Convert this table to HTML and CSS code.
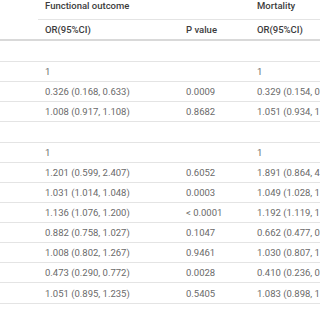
FILE: index.html
```html
<!DOCTYPE html>
<html>
<head>
<meta charset="utf-8">
<link rel="stylesheet" href="styles.css">
</head>
<body>
<div class="table">
  <div class="row head1">
    <div class="cell"></div>
    <div class="cell group span2">Functional outcome</div>
    <div class="cell group span2">Mortality</div>
  </div>
  <div class="row head2">
    <div class="cell"></div>
    <div class="cell">OR(95%CI)</div>
    <div class="cell">P value</div>
    <div class="cell">OR(95%CI)</div>
    <div class="cell">P value</div>
  </div>
  <div class="row tall"><div class="cell"></div><div class="cell"></div><div class="cell"></div><div class="cell"></div><div class="cell"></div></div>
  <div class="row"><div class="cell"></div><div class="cell">1</div><div class="cell"></div><div class="cell">1</div><div class="cell"></div></div>
  <div class="row"><div class="cell"></div><div class="cell">0.326 (0.168, 0.633)</div><div class="cell">0.0009</div><div class="cell">0.329 (0.154, 0.703)</div><div class="cell">0.0041</div></div>
  <div class="row"><div class="cell"></div><div class="cell">1.008 (0.917, 1.108)</div><div class="cell">0.8682</div><div class="cell">1.051 (0.934, 1.183)</div><div class="cell">0.4084</div></div>
  <div class="row tall"><div class="cell"></div><div class="cell"></div><div class="cell"></div><div class="cell"></div><div class="cell"></div></div>
  <div class="row"><div class="cell"></div><div class="cell">1</div><div class="cell"></div><div class="cell">1</div><div class="cell"></div></div>
  <div class="row"><div class="cell"></div><div class="cell">1.201 (0.599, 2.407)</div><div class="cell">0.6052</div><div class="cell">1.891 (0.864, 4.139)</div><div class="cell">0.1107</div></div>
  <div class="row"><div class="cell"></div><div class="cell">1.031 (1.014, 1.048)</div><div class="cell">0.0003</div><div class="cell">1.049 (1.028, 1.070)</div><div class="cell">&lt; 0.0001</div></div>
  <div class="row"><div class="cell"></div><div class="cell">1.136 (1.076, 1.200)</div><div class="cell">&lt; 0.0001</div><div class="cell">1.192 (1.119, 1.270)</div><div class="cell">&lt; 0.0001</div></div>
  <div class="row"><div class="cell"></div><div class="cell">0.882 (0.758, 1.027)</div><div class="cell">0.1047</div><div class="cell">0.662 (0.477, 0.918)</div><div class="cell">0.0135</div></div>
  <div class="row"><div class="cell"></div><div class="cell">1.008 (0.802, 1.267)</div><div class="cell">0.9461</div><div class="cell">1.030 (0.807, 1.315)</div><div class="cell">0.8112</div></div>
  <div class="row"><div class="cell"></div><div class="cell">0.473 (0.290, 0.772)</div><div class="cell">0.0028</div><div class="cell">0.410 (0.236, 0.712)</div><div class="cell">0.0016</div></div>
  <div class="row tall"><div class="cell"></div><div class="cell">1.051 (0.895, 1.235)</div><div class="cell">0.5405</div><div class="cell">1.083 (0.898, 1.306)</div><div class="cell">0.4036</div></div>
</div>
</body>
</html>
```
FILE: styles.css
```css
html, body {
  margin: 0;
  padding: 0;
  background: #ffffff;
  overflow: hidden;
}
body {
  width: 320px;
  height: 320px;
  font-family: Roboto, "Liberation Sans", sans-serif;
  font-size: 9.5px;
  color: #6a6a6a;
}
.table {
  width: 520px;
}
.row {
  display: grid;
  grid-template-columns: 38px 141px 71px 141px 71px;
  height: 20px;
  box-sizing: border-box;
  border-bottom: 1px solid #e4e4e4;
}
.row.tall {
  height: 21px;
}
.cell {
  display: flex;
  align-items: center;
  padding-left: 7px;
  white-space: nowrap;
  line-height: 11px;
}
.head1 {
  border-bottom: none;
}
.head1 .cell {
  align-items: flex-start;
  padding-top: 0;
}
.group {
  grid-column: span 2;
  border-bottom: 1px solid #e4e4e4;
  color: #3c3c3c;
  font-weight: 500;
}
.head2 {
  height: 21px;
  border-bottom: 2px solid #d9d9d9;
  color: #3c3c3c;
  font-weight: 500;
}
```
